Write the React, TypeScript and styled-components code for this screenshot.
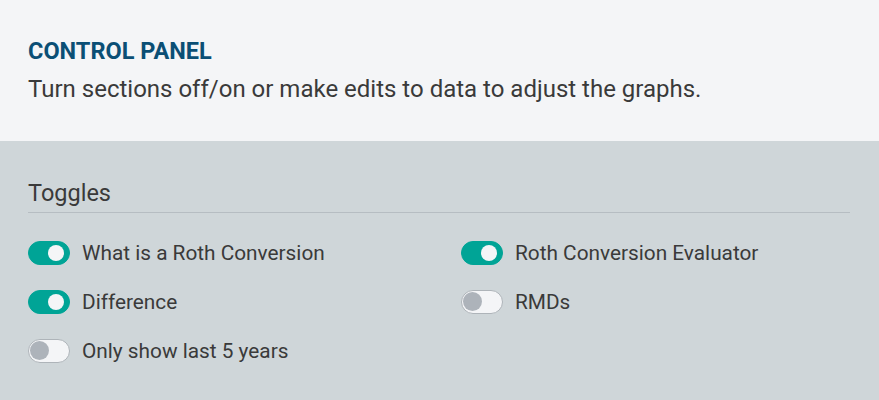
import styled, { createGlobalStyle } from "styled-components";

const Global = createGlobalStyle`
  html, body { margin: 0; padding: 0; }
  body {
    background: #cfd6d9;
    font-family: Roboto, "Liberation Sans", sans-serif;
    color: #3a3a3a;
  }
`

const Header = styled.header`
  background: #f4f5f7;
  height: 141px;
  box-sizing: border-box;
  padding: 37px 28px 0;
`

const Title = styled.h1`
  margin: 0;
  font-size: 23.5px;
  font-weight: 700;
  color: #0b4f75;
  line-height: 28px;
`

const Subtitle = styled.p`
  margin: 10px 0 0;
  font-size: 24px;
  line-height: 28px;
  color: #3a3a3a;
`

const Body = styled.section`
  padding: 0 29px 0 28px;
  height: 259px;
`

const SectionTitle = styled.h2`
  margin: 0;
  padding: 38px 0 5px;
  font-size: 23.5px;
  font-weight: 400;
  line-height: 28px;
  color: #3a3a3a;
  border-bottom: 1px solid #b6bdc2;
`

const Grid = styled.div`
  display: grid;
  grid-template-columns: 433px 1fr;
  row-gap: 25px;
  padding-top: 28px;
`

const Row = styled.label`
  display: flex;
  align-items: center;
  gap: 12px;
  font-size: 20.8px;
  line-height: 24px;
  color: #3a3a3a;
`

const Track = styled.span<{ $on: boolean }>`
  position: relative;
  flex: none;
  width: 42px;
  height: 24px;
  box-sizing: border-box;
  border-radius: 12px;
  background: ${p => (p.$on ? "#00a496" : "#f4f5f7")};
  border: 1px solid ${p => (p.$on ? "#00a496" : "#aeb4b9")};
`

const Knob = styled.span<{ $on: boolean }>`
  position: absolute;
  top: ${p => (p.$on ? "3px" : "1px")};
  left: ${p => (p.$on ? "19px" : "1px")};
  width: ${p => (p.$on ? "16px" : "19px")};
  height: ${p => (p.$on ? "16px" : "19px")};
  border-radius: 50%;
  background: ${p => (p.$on ? "#f4f5f7" : "#adb3ba")};
`

const Toggle = ({ label, on }: { label: string; on: boolean }) => (
  <Row>
    <Track $on={on}>
      <Knob $on={on} />
    </Track>
    {label}
  </Row>
)

function App() {
  return (
    <>
      <Global />
      <Header>
        <Title>CONTROL PANEL</Title>
        <Subtitle>Turn sections off/on or make edits to data to adjust the graphs.</Subtitle>
      </Header>
      <Body>
        <SectionTitle>Toggles</SectionTitle>
        <Grid>
          <Toggle label="What is a Roth Conversion" on />
          <Toggle label="Roth Conversion Evaluator" on />
          <Toggle label="Difference" on />
          <Toggle label="RMDs" on={false} />
          <Toggle label="Only show last 5 years" on={false} />
        </Grid>
      </Body>
    </>
  )
}

export default App
